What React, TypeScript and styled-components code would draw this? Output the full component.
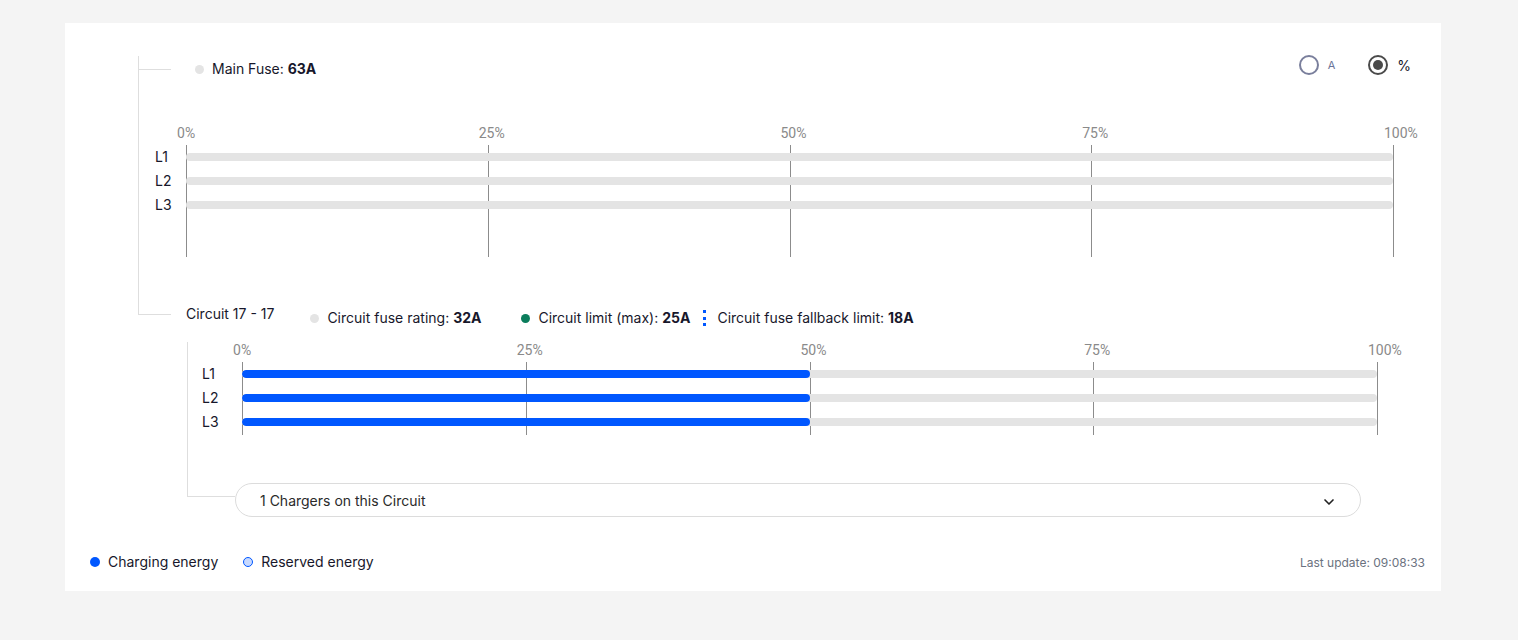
import React from "react";
import styled, { createGlobalStyle } from "styled-components";
import { ChevronDown } from "lucide-react";

const GlobalStyle = createGlobalStyle`
  html, body {
    margin: 0;
    padding: 0;
    background: #f4f4f4;
  }
  body {
    font-family: Inter, "Noto Sans", sans-serif;
    color: #17172b;
  }
`;

const Card = styled.div`
  box-sizing: border-box;
  width: 1376px;
  margin: 23px 0 0 65px;
  background: #fff;
  padding: 33px 16px 19px 25px;
`;

const Tree = styled.div`
  margin-left: 48px;
`;

const TopBranch = styled.div`
  border-left: 1px solid #dedede;
`;

const HeaderRow = styled.div`
  display: flex;
  align-items: center;
  height: 26px;
`;

const Connector = styled.span<{ $w: number }>`
  flex: none;
  width: ${(p) => p.$w}px;
  height: 1px;
  background: #dedede;
`;

const Elbow = styled.span<{ $w: number; $h: number }>`
  flex: none;
  box-sizing: border-box;
  width: ${(p) => p.$w}px;
  height: ${(p) => p.$h}px;
  border-left: 1px solid #dedede;
  border-bottom: 1px solid #dedede;
`;

const Dot = styled.span<{ $color: string; $ring?: string; $size?: number }>`
  flex: none;
  box-sizing: border-box;
  width: ${(p) => p.$size ?? 9}px;
  height: ${(p) => p.$size ?? 9}px;
  border-radius: 50%;
  background: ${(p) => p.$color};
  border: ${(p) => (p.$ring ? `1px solid ${p.$ring}` : "none")};
`;

const LegendItem = styled.span<{ $ml?: number; $gap?: number }>`
  display: inline-flex;
  align-items: center;
  gap: ${(p) => p.$gap ?? 8}px;
  margin-left: ${(p) => p.$ml ?? 0}px;
  font-size: 14px;
  line-height: 20px;
  white-space: nowrap;

  b {
    font-weight: 700;
  }
`;

const RadioGroup = styled.div`
  display: flex;
  align-items: center;
  align-self: flex-start;
  margin: -1px 14px 0 auto;
`;

const RadioOption = styled.label<{ $ml?: number }>`
  display: flex;
  align-items: center;
  gap: 9px;
  margin-left: ${(p) => p.$ml ?? 0}px;
  cursor: pointer;
`;

const RadioCircle = styled.span<{ $checked: boolean }>`
  box-sizing: border-box;
  width: 20px;
  height: 20px;
  border-radius: 50%;
  border: 2px solid ${(p) => (p.$checked ? "#4a4a4a" : "#7a7f9c")};
  display: flex;
  align-items: center;
  justify-content: center;

  &::after {
    content: "";
    display: ${(p) => (p.$checked ? "block" : "none")};
    width: 10px;
    height: 10px;
    border-radius: 50%;
    background: #4a4a4a;
  }
`;

const RadioText = styled.span<{ $small?: boolean }>`
  font-size: ${(p) => (p.$small ? 11 : 14)}px;
  color: ${(p) => (p.$small ? "#6b7397" : "#17172b")};
`;

/* chart */

const ChartGrid = styled.div<{ $labelW: number; $plotW: number; $mt: number; $ml: number }>`
  display: grid;
  grid-template-columns: ${(p) => p.$labelW}px ${(p) => p.$plotW}px;
  margin-top: ${(p) => p.$mt}px;
  margin-left: ${(p) => p.$ml}px;
`;

const Axis = styled.div`
  grid-column: 2;
  position: relative;
  height: 20px;
`;

const Tick = styled.span`
  position: absolute;
  top: 0;
  margin-left: -9px;
  font-family: Roboto, "Liberation Sans", sans-serif;
  font-size: 14px;
  line-height: 16px;
  color: #8a8a8a;
  white-space: nowrap;
`;

const PhaseLabels = styled.div`
  display: flex;
  flex-direction: column;
`;

const PhaseLabel = styled.div`
  height: 24px;
  line-height: 24px;
  font-size: 14px;
  color: #17172b;
`;

const Plot = styled.div<{ $pb: number }>`
  position: relative;
  padding-bottom: ${(p) => p.$pb}px;
`;

const GridLine = styled.span`
  position: absolute;
  top: 0;
  bottom: 0;
  width: 1px;
  background: #8c8c8c;
`;

const TrackRow = styled.div`
  position: relative;
  z-index: 1;
  height: 24px;
  display: flex;
  align-items: center;
`;

const Rail = styled.div`
  width: 100%;
  height: 8px;
  border-radius: 4px;
  background: #e4e4e4;
  overflow: hidden;
`;

const Fill = styled.div`
  height: 100%;
  border-radius: 4px;
  background: #0057ff;
`;

const ticks = [0, 25, 50, 75, 100];

function PhaseChart(props: {
  labelW: number;
  plotW: number;
  mt: number;
  ml: number;
  pb: number;
  values: number[];
}) {
  return (
    <ChartGrid $labelW={props.labelW} $plotW={props.plotW} $mt={props.mt} $ml={props.ml}>
      <Axis>
        {ticks.map((t) => (
          <Tick key={t} style={{ left: `${t}%` }}>
            {t}%
          </Tick>
        ))}
      </Axis>
      <PhaseLabels>
        {["L1", "L2", "L3"].map((l) => (
          <PhaseLabel key={l}>{l}</PhaseLabel>
        ))}
      </PhaseLabels>
      <Plot $pb={props.pb}>
        {ticks.map((t) => (
          <GridLine key={t} style={{ left: `${t}%` }} />
        ))}
        {props.values.map((v, i) => (
          <TrackRow key={i}>
            <Rail>{v > 0 && <Fill style={{ width: `${v}%` }} />}</Rail>
          </TrackRow>
        ))}
      </Plot>
    </ChartGrid>
  );
}

/* circuit */

const CircuitRow = styled.div`
  display: flex;
  align-items: flex-start;
`;

const CircuitTitle = styled.div`
  margin: 47px 0 0 15px;
  font-size: 14px;
  line-height: 20px;
  white-space: nowrap;
`;

const CircuitLegend = styled.div`
  display: flex;
  align-items: center;
  margin: 51px 0 0 36px;
`;

const FallbackMark = styled.span`
  display: inline-block;
  height: 16px;
  margin: 0 11px 0 13px;
  border-left: 3px dotted #0057ff;
`;

const CircuitSection = styled.div`
  margin: 19px 0 0 49px;
`;

const CircuitBlock = styled.div`
  border-left: 1px solid #dedede;
  padding-left: 14px;
`;

const ButtonRow = styled.div`
  display: flex;
  align-items: flex-start;
`;

const ChargersButton = styled.button`
  box-sizing: border-box;
  margin-top: 48px;
  width: 1126px;
  height: 34px;
  border: 1px solid #dcdcdc;
  border-radius: 17px;
  background: #fff;
  padding: 0 23px 0 24px;
  display: flex;
  align-items: center;
  justify-content: space-between;
  font-family: Inter, "Noto Sans", sans-serif;
  font-size: 14px;
  color: #2a2a2a;
  cursor: pointer;

  svg {
    margin-top: 3px;
  }
`;

/* footer */

const Footer = styled.div`
  display: flex;
  align-items: center;
  height: 20px;
  margin-top: 35px;
`;

const LastUpdate = styled.span`
  margin-left: auto;
  font-size: 12px;
  color: #6b7280;
`;

export default function App() {
  const [unit, setUnit] = React.useState<"A" | "%">("%");
  const [open, setOpen] = React.useState(false);

  return (
    <>
      <GlobalStyle />
      <Card>
        <Tree>
          <TopBranch>
            <HeaderRow>
              <Connector $w={32} />
              <LegendItem $ml={24}>
                <Dot $color="#e4e4e4" />
                <span>
                  Main Fuse: <b>63A</b>
                </span>
              </LegendItem>
              <RadioGroup>
                <RadioOption onClick={() => setUnit("A")}>
                  <RadioCircle $checked={unit === "A"} />
                  <RadioText $small>A</RadioText>
                </RadioOption>
                <RadioOption $ml={33} onClick={() => setUnit("%")}>
                  <RadioCircle $checked={unit === "%"} />
                  <RadioText>%</RadioText>
                </RadioOption>
              </RadioGroup>
            </HeaderRow>
            <PhaseChart labelW={31} plotW={1207} mt={43} ml={16} pb={40} values={[0, 0, 0]} />
          </TopBranch>
          <CircuitRow>
            <Elbow $w={33} $h={58} />
            <CircuitTitle>Circuit 17 - 17</CircuitTitle>
            <CircuitLegend>
              <LegendItem>
                <Dot $color="#e4e4e4" />
                <span>
                  Circuit fuse rating: <b>32A</b>
                </span>
              </LegendItem>
              <LegendItem $ml={40}>
                <Dot $color="#0b7d5c" />
                <span>
                  Circuit limit (max): <b>25A</b>
                </span>
              </LegendItem>
              <FallbackMark />
              <LegendItem>
                <span>
                  Circuit fuse fallback limit: <b>18A</b>
                </span>
              </LegendItem>
            </CircuitLegend>
          </CircuitRow>
          <CircuitSection>
            <CircuitBlock>
              <PhaseChart labelW={40} plotW={1135} mt={-5} ml={0} pb={1} values={[50, 50, 50]} />
            </CircuitBlock>
            <ButtonRow>
              <Elbow $w={48} $h={62} />
              <ChargersButton onClick={() => setOpen(!open)}>
                <span>1 Chargers on this Circuit</span>
                <ChevronDown size={16} strokeWidth={2.5} color="#222" />
              </ChargersButton>
            </ButtonRow>
          </CircuitSection>
        </Tree>
        <Footer>
          <LegendItem>
            <Dot $color="#0057ff" $size={10} />
            Charging energy
          </LegendItem>
          <LegendItem $ml={25}>
            <Dot $color="#c7d9ff" $ring="#0057ff" $size={10} />
            Reserved energy
          </LegendItem>
          <LastUpdate>Last update: 09:08:33</LastUpdate>
        </Footer>
      </Card>
    </>
  );
}
